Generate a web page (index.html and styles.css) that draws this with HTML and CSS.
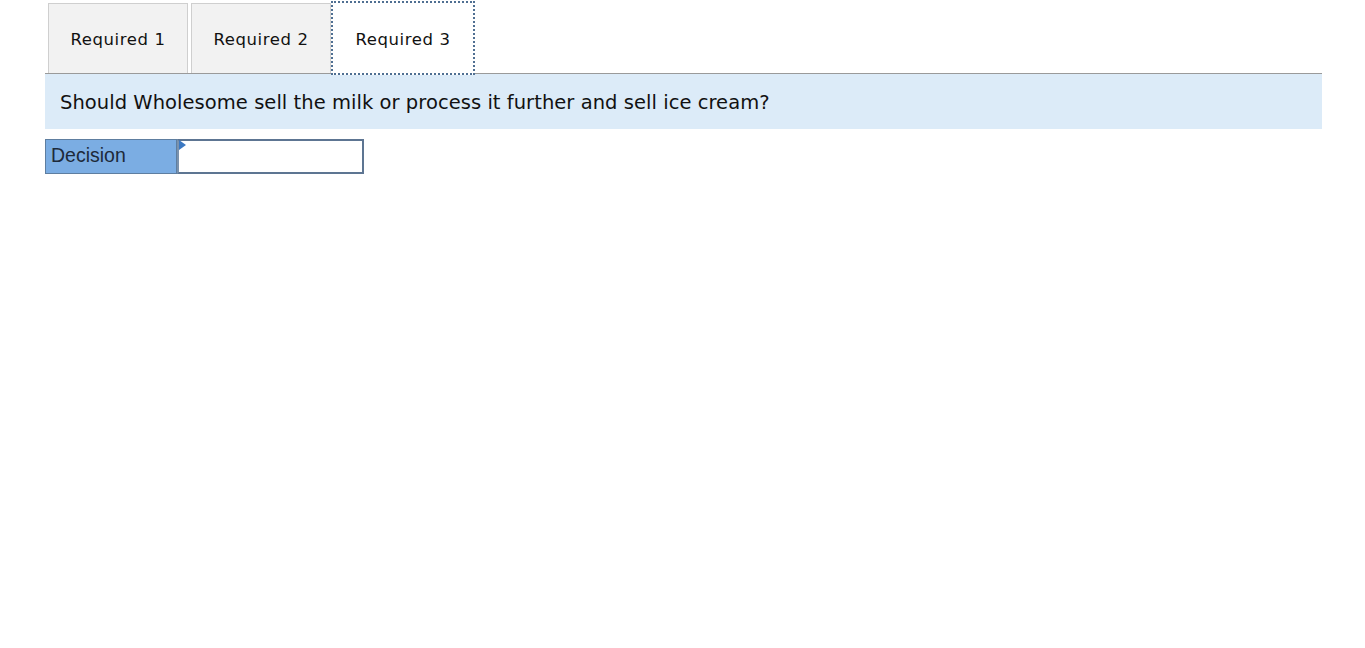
FILE: index.html
```html
<!DOCTYPE html>
<html>
<head>
<meta charset="utf-8">
<link rel="stylesheet" href="styles.css">
</head>
<body>
<div class="page">
  <div class="tabs">
    <div class="tab">Required 1</div>
    <div class="tab">Required 2</div>
    <div class="tab active">Required 3</div>
  </div>
  <div class="question">Should Wholesome sell the milk or process it further and sell ice cream?</div>
  <div class="decision-row">
    <div class="label">Decision</div>
    <div class="input"><span class="marker"></span></div>
  </div>
</div>
</body>
</html>
```

FILE: styles.css
```css
html, body {
  margin: 0;
  padding: 0;
  background: #fff;
}
.page {
  margin-left: 45px;
  width: 1277px;
  font-family: "DejaVu Sans", Verdana, sans-serif;
  color: #111;
}
.tabs {
  display: flex;
  align-items: flex-end;
  height: 73px;
  padding-left: 3px;
  gap: 3px;
  border-bottom: 1px solid #9a9a9a;
}
.tab {
  width: 138px;
  height: 67px;
  padding-top: 2px;
  box-sizing: content-box;
  background: #f2f2f2;
  border: 1px solid #cfcfcf;
  border-bottom: none;
  display: flex;
  align-items: center;
  justify-content: center;
  font-size: 16.5px;
  letter-spacing: 0.6px;
}
.tab.active {
  width: 140px;
  height: 67px;
  padding-top: 3px;
  background: #fff;
  border: 2px dotted #4f6f92;
  margin-left: -3px;
  margin-bottom: -2px;
  position: relative;
  z-index: 1;
}
.question {
  height: 53px;
  padding-top: 2px;
  background: #dcebf8;
  display: flex;
  align-items: center;
  padding-left: 15px;
  font-size: 19.5px;
  letter-spacing: 0.05px;
}
.decision-row {
  display: flex;
  margin-top: 10px;
  height: 35px;
}
.label {
  width: 132px;
  box-sizing: border-box;
  background: #7badE3;
  border: 1px solid #5e7ea0;
  font-family: "Liberation Sans", Arial, sans-serif;
  font-size: 19.5px;
  color: #1d2a3a;
  display: flex;
  align-items: center;
  padding-left: 5px;
  padding-bottom: 3px;
}
.input {
  width: 187px;
  box-sizing: border-box;
  border: 2px solid #5d7592;
  border-left-color: #7a92ad;
  background: #fff;
  position: relative;
}
.marker {
  position: absolute;
  left: 0;
  top: -1px;
  width: 0;
  height: 0;
  border-top: 5px solid transparent;
  border-bottom: 5px solid transparent;
  border-left: 7px solid #3b78c2;
}
```
